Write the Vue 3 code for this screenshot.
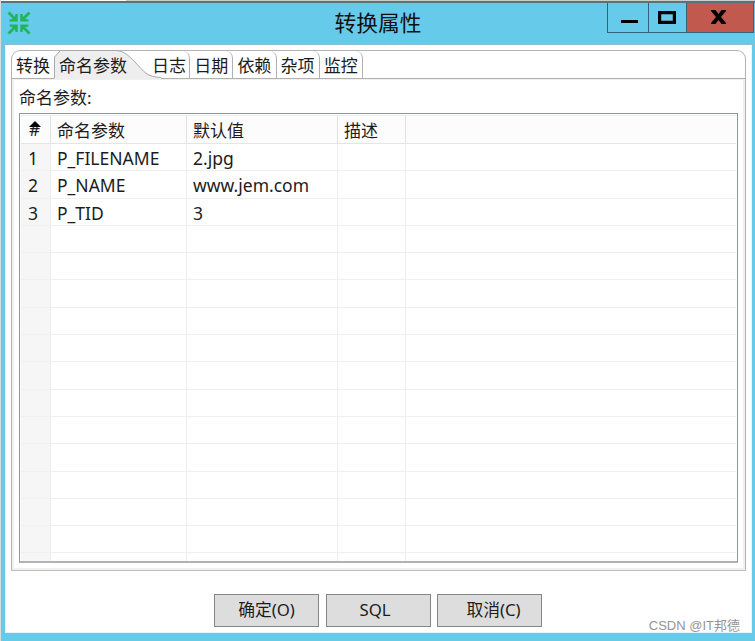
<script setup>
const tabs = [
  { label: '转换', kind: 'first' },
  { label: '命名参数', kind: 'active' },
  { label: '日志', kind: 'after' },
  { label: '日期', kind: '' },
  { label: '依赖', kind: '' },
  { label: '杂项', kind: '' },
  { label: '监控', kind: '' },
]
const rows = [
  ['1', 'P_FILENAME', '2.jpg'],
  ['2', 'P_NAME', 'www.jem.com'],
  ['3', 'P_TID', '3'],
  ...Array.from({ length: 13 }, () => ['', '', '']),
]
</script>

<template>
  <div class="window">
    <div class="backdrop"></div>
    <header class="titlebar">
      <svg class="logo" width="24" height="24" viewBox="0 0 24 24">
        <g fill="#22b45a" stroke="#22b45a">
          <path d="M1.500 1.500 8 8M22.500 1.500 16 8M1.500 22.500 8 16M22.500 22.500 16 16" stroke-width="2.8" />
          <path d="M2.500 10.500V8.500L5.500 8 8 5.500 8.500 3H10.700V10.500ZM21.500 10.500V8.500L18.500 8 16 5.500 15.500 3H13.300V10.500ZM2.500 13.500V15.500L5.500 16 8 18.500 8.500 21H10.700V13.500ZM21.500 13.500V15.500L18.500 16 16 18.500 15.500 21H13.300V13.500Z" stroke="none" />
        </g>
      </svg>
      <h1>转换属性</h1>
      <div class="controls">
        <span class="ctl min"><svg width="17" height="3"><path d="M0 0H17V3H0Z" /></svg></span>
        <span class="ctl max"><svg width="18" height="13"><path d="M1.500 1.500H16.500V11.500H1.500Z" fill="none" stroke="#000" stroke-width="3.4" /></svg></span>
        <span class="ctl close"><svg width="15" height="14" viewBox="0 0 15 14"><path d="M0 0H4.500L7.500 4 10.500 0H15V1L10 7 15 13V14H10.500L7.500 10 4.500 14H0V13L5 7 0 1Z" /></svg></span>
      </div>
    </header>
    <main class="client">
      <section class="folder">
        <nav class="tabs">
          <div v-for="t in tabs" :key="t.label" class="tab" :class="t.kind">
            <svg v-if="t.kind === 'active'" class="shape" width="108" height="29" viewBox="0 0 108 29">
              <path d="M.5 28V7L6.500 .5H62C70 1 74 5 81 12C90 22 93 27 107 27.500V29H0Z" fill="#eee" />
              <path d="M.5 28V7L6.500 .5H62C70 1 74 5 81 12C90 22 93 27 107 27.500" fill="none" stroke="#a8a8a8" />
            </svg>
            <span>{{ t.label }}</span>
          </div>
        </nav>
        <div class="panel">
          <div class="caption">命名参数:</div>
          <div class="table">
            <div class="row head">
              <div class="cell num">#<svg class="sort" width="12" height="7"><path d="M6 0 12 6H0Z" /></svg></div>
              <div class="cell">命名参数</div>
              <div class="cell">默认值</div>
              <div class="cell">描述</div>
              <div class="cell rest"></div>
            </div>
            <div v-for="(r, i) in rows" :key="i" class="row">
              <div class="cell num">{{ r[0] }}</div>
              <div class="cell">{{ r[1] }}</div>
              <div class="cell">{{ r[2] }}</div>
              <div class="cell"></div>
              <div class="cell rest"></div>
            </div>
          </div>
        </div>
      </section>
      <footer>
        <button>确定(O)</button>
        <button class="sql">SQL</button>
        <button class="cancel">取消(C)</button>
      </footer>
      <div class="mark">CSDN @IT邦德</div>
    </main>
  </div>
</template>

<style>
body { margin: 0; overflow: hidden; }
</style>
<style scoped>
* { box-sizing: border-box; }
.window {
  width: 755px; height: 641px; background: #66caea; border-left: 1px solid #d4dde0;
  font-family: "Noto Sans", "Noto Sans CJK SC", sans-serif; font-size: 17px; color: #1c1c1c;
  display: flex; flex-direction: column; overflow: hidden;
}
.backdrop { height: 3px; flex: none; background: linear-gradient(90deg, #fafafa 125px, #c9cdce 125px); border-bottom: 2px solid #56747e; }
.titlebar { height: 42px; flex: none; display: grid; grid-template-columns: 148px 1fr 148px; border-bottom: 1px solid #91bdcb; }
.logo { margin: 8px 0 0 6px; }
h1 { margin: 0; font-size: 21.7px; font-weight: 400; line-height: 40px; text-align: center; color: #101010; }
.controls { display: flex; height: 30px; border: 1px solid #34647a; border-top: 0; margin-right: 1px; }
.ctl { display: flex; align-items: center; justify-content: center; border-right: 1px solid #34647a; }
.min { width: 41px; padding: 8px 0 0 3px; }
.max { width: 38px; padding: 0 2px 1px 0; }
.close { flex: 1; background: #c2594e; border: 0; padding: 0 3px 1px 0; }
.client { width: 747px; height: 588px; margin-left: 4px; background: #fff; display: flex; flex-direction: column; border: 1px solid #e6f5fa; border-top: 0; flex: none; }
.folder { width: 735px; height: 521px; margin: 5px 0 0 5px; border: 1px solid #b4b4b4; border-bottom: 2px solid #bfbfbf; border-radius: 9px 9px 0 0; display: flex; flex-direction: column; flex: none; }
.tabs { height: 28px; flex: none; display: flex; border-bottom: 1px solid #b0b0b0; }
.tab { width: 43.2px; height: 27px; position: relative; padding-left: 4px; line-height: 29px; border-right: 1px solid #b0b0b0; border-radius: 0 7px 0 0; white-space: nowrap; }
.tab span { position: relative; }
.first { border: 0; width: 42px; }
.active { border: 0; width: 93px; padding-left: 5px; }
.after { padding-left: 5px; }
.shape { position: absolute; left: 0; top: -1px; z-index: 0; overflow: visible; }
.panel { flex: 1; border: 2px solid #f0f0f0; border-top-width: 1px; padding: 2px 5px 5px; }
.caption { height: 31px; line-height: 31px; }
.table { width: 719px; height: 450px; border: 1px solid #8f959e; border-bottom: 2px solid #b0b2b6; padding: 1px; overflow: hidden; }
.row { height: 27.3px; display: grid; grid-template-columns: 30px 136px 151px 68px 1fr; grid-template-rows: 100%; }
.cell { border-right: 1px solid #eee; border-bottom: 1px solid #f0f0f0; padding-left: 6px; line-height: 29px; font-size: 17.5px; white-space: nowrap; }
.num { background: #f6f6f6; position: relative; padding-left: 7px; }
.rest { border-right: 0; }
.head { height: 29px; }
.head .cell { background: #fcfcfc; border-right: 1px solid #e2e2e2; border-top: 1px solid #eee; border-bottom: 1px solid #e5e5e5; font-size: 17px; line-height: 29px; }
.head .rest { border-right: 0; }
.head .num { font-size: 17px; line-height: 27px; padding-left: 8px; }
.sort { position: absolute; left: 8px; top: 5px; }
footer { display: flex; gap: 6.5px; margin: 23px 0 0 208px; }
button { width: 105px; height: 33px; border: 1px solid #858585; background: #ddd; font: inherit; font-size: 16.8px; line-height: 28px; padding: 0 0 1px; color: #1c1c1c; }
.sql { padding-right: 6px; }
.cancel { padding-left: 8px; }
.mark { font-size: 13px; line-height: 16px; color: #949494; align-self: flex-end; margin: -9px 11px 0 0; font-family: "Liberation Sans", "Noto Sans CJK SC", sans-serif; }
</style>
